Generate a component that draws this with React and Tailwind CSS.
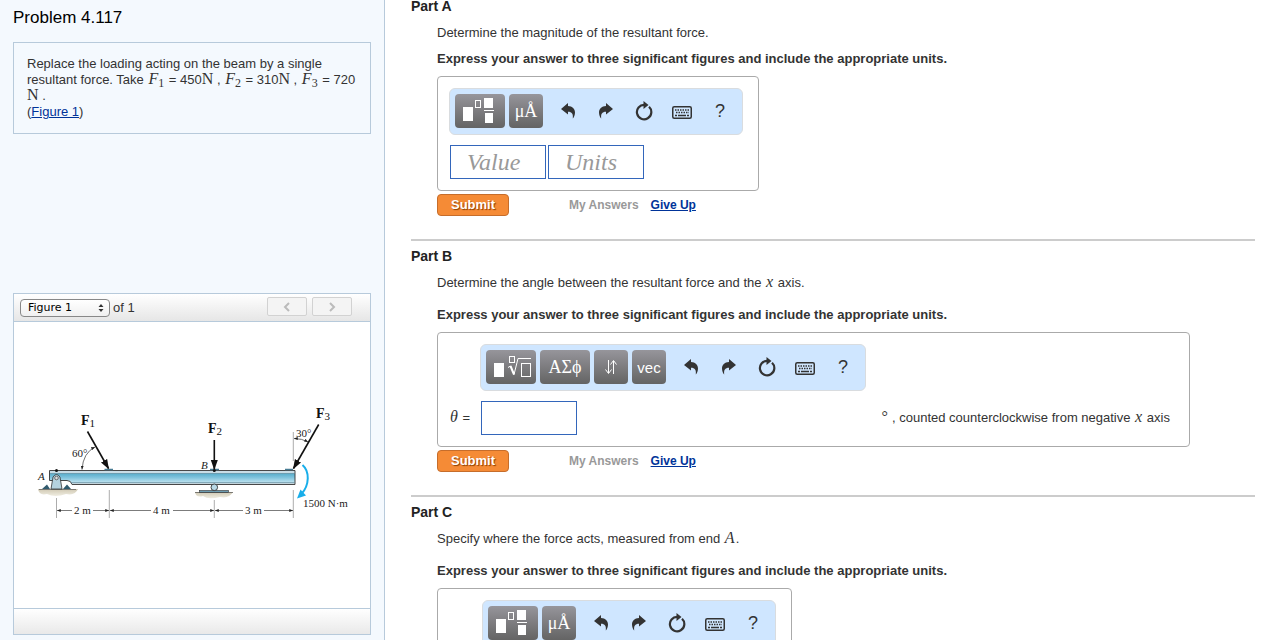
import React, { useState } from "react";

/* -------------------- toolbar icons -------------------- */

function UndoIcon({ flip }) {
  return (
    <svg
      viewBox="0 0 16 18"
      className={"h-4.5 w-4 fill-[#333] " + (flip ? "-scale-x-100" : "")}
      aria-hidden="true"
    >
      <path d="M1 7 8 1V4C12.500 4 15 7 15 10.500 15 13 14 15.500 12.800 16.500 13.300 12 12 9.800 8 9.800V12.500Z" />
    </svg>
  );
}

function ResetIcon() {
  return (
    <svg viewBox="0 0 20 20" className="h-5 w-5" aria-hidden="true">
      <path d="M15 5.800A7.200 7.200 0 1 1 10.500 3.900" fill="none" stroke="#333" strokeWidth="2.200" />
      <path d="M9.500 0 14.500 4 9.500 8Z" fill="#333" />
    </svg>
  );
}

function KeyboardIcon() {
  return (
    <svg viewBox="0 0 20 14" className="mt-1 h-3.5 w-5" aria-hidden="true">
      <rect x="0.75" y="0.75" width="18.500" height="11.500" rx="1.500" fill="none" stroke="#333" strokeWidth="1.500" />
      <path
        d="M3 4h14M4 6.500h13"
        fill="none"
        stroke="#333"
        strokeWidth="1.500"
        strokeDasharray="1.500 1"
      />
      <path d="M3 9.500h2M6 9.500h8M15 9.500h2" fill="none" stroke="#333" strokeWidth="1.500" />
    </svg>
  );
}

function FractionIcon() {
  return (
    <svg viewBox="0 0 50 34" className="h-8.5 w-12.5" aria-hidden="true">
      <g fill="#fff">
        <rect x="8" y="13" width="10" height="14" />
        <rect x="29" y="4" width="9" height="10" />
        <rect x="29" y="16" width="10" height="1" />
        <rect x="30" y="19" width="8" height="10" />
      </g>
      <rect x="20.500" y="6.500" width="5" height="7" fill="none" stroke="#fff" />
    </svg>
  );
}

function RootIcon() {
  return (
    <svg viewBox="0 0 50 34" className="h-8.5 w-12.5" aria-hidden="true">
      <rect x="8" y="13" width="10" height="14" fill="#fff" />
      <g fill="none" stroke="#fff">
        <rect x="23.500" y="6.500" width="5" height="6" />
        <path d="M22 17.500 24.500 16 28 24.500 32 8.500H45" />
        <path d="M24.500 16 28 24.500" strokeWidth="2" />
        <rect x="35.500" y="13.500" width="9" height="13" />
      </g>
    </svg>
  );
}

function SwapIcon() {
  return (
    <svg viewBox="0 0 14 16" className="h-4 w-3.5" fill="none" stroke="#fff" aria-hidden="true">
      <path d="M4.500 1V14M1.500 10.500 4.500 14.500 7.500 10.500" />
      <path d="M9.500 15V2M6.500 5.500 9.500 1.500 12.500 5.500" />
    </svg>
  );
}

/* -------------------- toolbar -------------------- */

const KEYS = {
  fraction: { label: "Templates", wide: true, face: <FractionIcon /> },
  root: { label: "Templates", wide: true, face: <RootIcon /> },
  units: { label: "Unit symbols", face: "μÅ" },
  greek: { label: "Greek symbols", wide: true, face: "ΑΣϕ" },
  swap: { label: "Arrows", face: <SwapIcon /> },
  vec: {
    label: "Vector",
    face: <span className="font-['Liberation_Sans',sans-serif] text-[15px]">vec</span>,
  },
};

const ACTIONS = [
  ["Undo", <UndoIcon />],
  ["Redo", <UndoIcon flip />],
  ["Reset", <ResetIcon />],
  ["Keyboard shortcuts", <KeyboardIcon />],
  ["Help", <span className="text-lg">?</span>],
];

function Toolbar({ keys }) {
  return (
    <div className="flex w-max items-center rounded-md border border-[#d9dcdf] bg-[#cfe6ff] pt-[5px] pr-[3px] pb-1.5 pl-[5px]">
      <div className="flex gap-1">
        {keys.map((k) => (
          <button
            key={k}
            type="button"
            aria-label={KEYS[k].label}
            className={
              "flex h-[34px] items-center justify-center rounded bg-linear-to-b from-[#96959b] to-[#646464] font-['Liberation_Serif','DejaVu_Serif',serif] text-lg leading-none text-white " +
              (KEYS[k].wide ? "w-[50px]" : "w-[34px]")
            }
          >
            {KEYS[k].face}
          </button>
        ))}
      </div>
      <div className="ml-1.5 flex">
        {ACTIONS.map(([label, icon]) => (
          <button
            key={label}
            type="button"
            aria-label={label}
            className="flex h-[34px] w-[38px] items-center justify-center text-[#333]"
          >
            {icon}
          </button>
        ))}
      </div>
    </div>
  );
}

/* -------------------- answer parts -------------------- */

function MathVar({ children, sub }) {
  return (
    <span className="mx-px font-['Liberation_Serif',serif] text-base leading-0">
      <i>{children}</i>
      {sub ? <sub className="text-xs leading-0">{sub}</sub> : null}
    </span>
  );
}

function Newton() {
  return <span className="font-['Liberation_Serif',serif] text-base leading-0">N</span>;
}

function AnswerInput({ label, placeholder }) {
  const [value, setValue] = useState("");
  return (
    <input
      aria-label={label}
      placeholder={placeholder}
      value={value}
      onChange={(e) => setValue(e.target.value)}
      className="h-[34px] w-24 border border-[#3366bb] bg-white px-4 font-['Liberation_Serif',serif] text-2xl leading-7 italic placeholder:text-[#999] focus:outline-none"
    />
  );
}

function SubmitRow() {
  return (
    <div className="mt-[3px] flex items-center text-xs font-bold">
      <button
        type="submit"
        className="h-[22px] w-[72px] rounded border border-[#c66d2b] bg-[#f58b36] pb-0.5 text-[13px] leading-none text-white [text-shadow:1px_1px_1px_#8a3c00]"
      >
        Submit
      </button>
      <span className="ml-[60px] text-[#999]">My Answers</span>
      <a href="#give-up" className="ml-3 text-[#003399] underline">
        Give Up
      </a>
    </div>
  );
}

function Part({ name, prompt, tight, submit = true, children }) {
  return (
    <form
      className="border-b-2 border-[#ccc] pb-[23px] last:border-b-0"
      onSubmit={(e) => e.preventDefault()}
    >
      <h2 className="text-sm leading-3 font-bold text-[#222]">{name}</h2>
      <div className="mt-[13px] ml-[26px] leading-4">
        <p className={tight ? "mb-2.5" : "mb-4"}>{prompt}</p>
        <p className="mb-[9px] font-bold">
          Express your answer to three significant figures and include the appropriate units.
        </p>
        {children}
        {submit ? <SubmitRow /> : null}
      </div>
    </form>
  );
}

/* -------------------- beam figure -------------------- */

function BeamFigure() {
  return (
    <svg
      viewBox="14 322 356 286"
      className="block w-full font-['Liberation_Serif',serif]"
      role="img"
      aria-label="Loaded beam"
    >
      <defs>
        <linearGradient id="web" x1="0" y1="0" x2="0" y2="1">
          <stop offset="0" stopColor="#3f9fc0" />
          <stop offset="0.500" stopColor="#7fc3dc" />
          <stop offset="1" stopColor="#d3edf6" />
        </linearGradient>
        <linearGradient id="soil" x1="0" y1="0" x2="0" y2="1">
          <stop offset="0" stopColor="#cfc8b2" />
          <stop offset="1" stopColor="#f0ede2" />
        </linearGradient>
        <marker id="force" viewBox="0 0 10 8" refX="9" refY="4" markerWidth="10" markerHeight="8" markerUnits="userSpaceOnUse" orient="auto">
          <path d="M0 0.500 10 4 0 7.500Z" fill="#111" />
        </marker>
        <marker id="dim" viewBox="0 0 5 4" refX="5" refY="2" markerWidth="4" markerHeight="3" markerUnits="userSpaceOnUse" orient="auto-start-reverse">
          <path d="M0 0 5 2 0 4Z" fill="#222" />
        </marker>
      </defs>

      {/* ground */}
      <path d="M38 489H78Q75 496 66 494 55 498 47 494 39 496 38 489Z" fill="url(#soil)" />
      <path d="M195 492H233Q229 499 220 497 208 500 203 496 196 498 195 492Z" fill="url(#soil)" />
      <path d="M39 489.500H76M195 492.500H233" stroke="#555" strokeWidth="0.700" />

      {/* beam */}
      <path d="M49.500 471H295V484H72Q71 480.500 67 480.500H49.500Z" fill="url(#web)" />
      <rect x="49.500" y="471" width="245.500" height="2.500" fill="#c9dde6" />
      <rect x="72" y="482.500" width="223" height="1.500" fill="#c2d5dd" />
      <path d="M49.500 470.500H295V484.500H72Q71 480.500 67 480.500H49.500Z" fill="none" stroke="#333" strokeWidth="0.900" />
      <path d="M50 473.500H294.500M71 482.500H294.500" stroke="#47778a" strokeWidth="0.500" />
      <path d="M104.500 469.500H113M210 469.500H219M285 469.500H293" stroke="#477b93" strokeWidth="1.500" />

      {/* pin support */}
      <path d="M42 489 47 484.500 50 489ZM63 489 67 484.500 71 489Z" fill="#315b6e" />
      <path d="M51 489 53 477Q56.500 472 60 477L62 489Z" fill="#b5d2df" stroke="#333" strokeWidth="0.800" />
      <circle cx="56.500" cy="478" r="1.800" fill="#ddd" stroke="#555" strokeWidth="0.800" />
      <circle cx="56.500" cy="470.500" r="1.500" fill="#111" />

      {/* roller support */}
      <rect x="199.500" y="490.500" width="29" height="1.800" fill="#6d9cb0" stroke="#333" strokeWidth="0.600" />
      <circle cx="214.300" cy="487.300" r="3.300" fill="#b9d9e6" stroke="#333" strokeWidth="0.900" />
      <circle cx="214.300" cy="470.500" r="1.500" fill="#111" />

      {/* forces */}
      <g stroke="#111" strokeWidth="1.600" fill="none">
        <path d="M87.500 431.500 108.500 468.500" markerEnd="url(#force)" />
        <path d="M214.300 440V469" markerEnd="url(#force)" />
        <path d="M318.700 424.500 293.500 468.500" markerEnd="url(#force)" />
      </g>
      <g stroke="#333" strokeWidth="0.700" fill="none">
        <path d="M95 447Q83 453 82 469.500" markerStart="url(#dim)" markerEnd="url(#dim)" />
        <path d="M294 438.500Q302 438.500 308 442" markerStart="url(#dim)" markerEnd="url(#dim)" />
      </g>
      <path d="M302.500 465C309.500 471 310 485 301 494.500" fill="none" stroke="#18aeea" strokeWidth="2" />
      <path d="M297 498.500 300.500 489.500 306 495.500Z" fill="#18aeea" />

      {/* dimension lines */}
      <g stroke="#888" strokeWidth="0.700">
        <path d="M56.500 498V518M109.300 490V518M214.300 500V518M293.300 490V518M293.300 432V461" />
      </g>
      <g stroke="#444" strokeWidth="0.700">
        <path d="M72 510.500H57" markerEnd="url(#dim)" />
        <path d="M93 510.500H109" markerEnd="url(#dim)" />
        <path d="M151 510.500H110" markerEnd="url(#dim)" />
        <path d="M173 510.500H214" markerEnd="url(#dim)" />
        <path d="M243 510.500H215" markerEnd="url(#dim)" />
        <path d="M264 510.500H293" markerEnd="url(#dim)" />
      </g>

      {/* labels */}
      <g fill="#222" fontSize="11">
        <text x="72" y="457">60°</text>
        <text x="296" y="437">30°</text>
        <text x="38" y="480" fontStyle="italic">A</text>
        <text x="201" y="469" fontStyle="italic">B</text>
        <text x="74" y="514">2 m</text>
        <text x="153" y="514">4 m</text>
        <text x="245" y="514">3 m</text>
        <text x="303" y="507">1500 N·m</text>
      </g>
      <g fill="#111" fontSize="14" fontWeight="bold">
        <text x="81" y="425">F<tspan fontSize="11" fontWeight="normal" dy="2">1</tspan></text>
        <text x="208" y="433">F<tspan fontSize="11" fontWeight="normal" dy="2">2</tspan></text>
        <text x="316" y="418">F<tspan fontSize="11" fontWeight="normal" dy="2">3</tspan></text>
      </g>
    </svg>
  );
}

function PagerButton({ label, d }) {
  return (
    <button
      type="button"
      aria-label={label}
      className="flex h-[19px] w-10 items-center justify-center rounded-xs border border-[#d2d2d2] bg-[#f4f4f4]"
    >
      <svg viewBox="0 0 8 10" className="h-2.5 w-2" fill="none" stroke="#bbb" strokeWidth="2" aria-hidden="true">
        <path d={d} />
      </svg>
    </button>
  );
}

function FigurePanel() {
  return (
    <section className="mt-auto border border-[#b7cadb] bg-white">
      <div className="flex h-7 items-center border-b border-[#b7cadb] bg-linear-to-b from-white to-[#e6e6e6] pr-[18px] pl-1.5">
        <div className="relative">
          <select
            aria-label="Figure"
            className="block h-[18px] w-[90px] appearance-none rounded border border-[#888] bg-linear-to-b from-white to-[#f0f0f0] pl-[7px] font-['DejaVu_Sans',sans-serif] text-[11px] leading-4 text-black"
          >
            <option>Figure 1</option>
          </select>
          <svg viewBox="0 0 6 8" className="pointer-events-none absolute top-[5px] right-1.5 h-2 w-1.5 fill-[#333]" aria-hidden="true">
            <path d="M3 0 5.500 3H.5ZM3 8 .5 5H5.500Z" />
          </svg>
        </div>
        <span className="ml-[3px]">of 1</span>
        <div className="mb-0.5 ml-auto flex gap-[5px]">
          <PagerButton label="Previous figure" d="M6 1 2 5 6 9" />
          <PagerButton label="Next figure" d="M2 1 6 5 2 9" />
        </div>
      </div>
      <BeamFigure />
      <div className="h-[26px] border-t border-[#b7cadb] bg-linear-to-b from-white to-[#e9e9e9]" />
    </section>
  );
}

/* -------------------- page -------------------- */

export default function App() {
  return (
    <div className="flex h-screen bg-white font-['Liberation_Sans',Arial,sans-serif] text-[13px] text-[#333]">
      <aside className="flex w-[385px] shrink-0 flex-col border-r border-[#b7cadb] bg-[#f4f9fe] px-[13px] pt-2 pb-[5px]">
        <h1 className="text-[17px] leading-5 text-black">Problem 4.117</h1>
        <div className="mt-3.5 border border-[#b7cadb] py-[13px] pr-px pl-[13px] leading-4">
          <p>
            Replace the loading acting on the beam by a single
            <br />
            resultant force. Take <MathVar sub="1">F</MathVar> = 450
            <Newton /> , <MathVar sub="2">F</MathVar> = 310
            <Newton /> , <MathVar sub="3">F</MathVar> = 720
            <br />
            <Newton /> .
          </p>
          <p>
            (
            <a href="#figure-1" className="text-[#003399] underline">
              Figure 1
            </a>
            )
          </p>
        </div>
        <FigurePanel />
      </aside>

      <main className="flex min-w-0 flex-1 flex-col gap-[9px] overflow-y-auto pr-[25px] pl-[26px] [scrollbar-width:none]">
        <Part name="Part A" tight prompt="Determine the magnitude of the resultant force.">
          <div className="w-max rounded border border-[#aaa] py-[11px] pr-[15px] pl-[11px]">
            <Toolbar keys={["fraction", "units"]} />
            <div className="mt-2.5 ml-px flex gap-0.5">
              <AnswerInput label="Value" placeholder="Value" />
              <AnswerInput label="Units" placeholder="Units" />
            </div>
          </div>
        </Part>

        <Part
          name="Part B"
          prompt={
            <>
              Determine the angle between the resultant force and the <MathVar>x</MathVar> axis.
            </>
          }
        >
          <div className="grid w-max grid-cols-[31px_auto_auto] items-center gap-y-2.5 rounded border border-[#aaa] py-[11px] pr-[19px] pl-[11px]">
            <div className="col-start-2">
              <Toolbar keys={["root", "greek", "swap", "vec"]} />
            </div>
            <span className="col-start-1">
              <MathVar>θ</MathVar> =
            </span>
            <div className="pl-px">
              <AnswerInput label="θ" />
            </div>
            <span className="pl-3.5">
              <MathVar>°</MathVar> , counted counterclockwise from negative <MathVar>x</MathVar> axis
            </span>
          </div>
        </Part>

        <Part
          name="Part C"
          submit={false}
          prompt={
            <>
              Specify where the force acts, measured from end <MathVar>A</MathVar>.
            </>
          }
        >
          <div className="w-max rounded border border-[#aaa] py-[11px] pr-[15px] pl-11">
            <Toolbar keys={["fraction", "units"]} />
          </div>
        </Part>
      </main>
    </div>
  );
}
